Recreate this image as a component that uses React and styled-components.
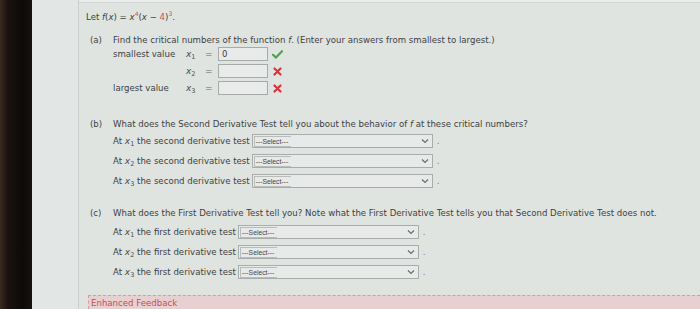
import React from 'react';
import styled, { createGlobalStyle } from 'styled-components';

const GlobalStyle = createGlobalStyle`
  body {
    margin: 0;
    background: #e1e4e2;
    font-family: 'DejaVu Sans', Verdana, sans-serif;
    color: #3d3f40;
  }
`;

const Frame = styled.div`
  display: flex;
  width: 700px;
  height: 309px;
  overflow: hidden;
  background: #e0e4e1;
`;

const Bezel = styled.div`
  width: 32px;
  flex-shrink: 0;
  background: linear-gradient(90deg, #3a2a1e 0%, #1a120e 25%, #0d0a09 70%, #15110f 100%);
`;

const Sidebar = styled.div`
  width: 46px;
  flex-shrink: 0;
  background: #e2e6e4;
  border-right: 1px solid #cbd0ce;
`;

const Main = styled.div`
  flex: 1;
  display: flex;
  flex-direction: column;
  font-size: 8.6px;
  line-height: 11px;
`;

const TopRule = styled.div`
  height: 3px;
  background: #e9ecea;
  border-bottom: 1px solid #d3d7d5;
`;

const Statement = styled.div`
  margin: 9px 0 0 7px;
`;

const Red = styled.span`
  color: #c8505a;
`;

const Sup = styled.sup`
  font-size: 6px;
  line-height: 0;
`;

const Question = styled.div`
  display: flex;
  margin-top: ${(p) => p.$top}px;
  padding-left: 11px;
`;

const PartLabel = styled.span`
  width: 23px;
  flex-shrink: 0;
`;

const Rows = styled.div`
  display: flex;
  flex-direction: column;
  gap: ${(p) => p.$gap}px;
  margin-top: ${(p) => p.$top}px;
  padding-left: 34px;
`;

const CritRow = styled.div`
  display: grid;
  grid-template-columns: 73px 19px 13px 50px 18px;
  align-items: center;
  height: 14px;
`;

const Var = styled.span`
  font-style: italic;
  font-size: 9px;
  color: #4a4c4d;
`;

const Sub = styled.sub`
  font-size: 6.5px;
  font-style: normal;
  vertical-align: -2px;
  line-height: 0;
`;

const Eq = styled.span`
  color: #666;
  font-size: 9px;
`;

const Input = styled.div`
  height: 14px;
  box-sizing: border-box;
  border: 1px solid #a6aaa8;
  background: #e8ebe9;
  padding-left: 3px;
  font-size: 8.5px;
  line-height: 12px;
`;

const Mark = styled.span`
  display: flex;
  justify-content: center;
`;

const TestRow = styled.div`
  display: flex;
  align-items: center;
  height: 14px;
`;

const TestLabel = styled.span`
  margin-right: 2px;
`;

const Select = styled.div`
  width: 181px;
  height: 14px;
  box-sizing: border-box;
  border: 1px solid #a8acaa;
  background: #e7eae8;
  display: flex;
  align-items: center;
  justify-content: space-between;
  padding: 0 3px 0 1px;
`;

const SelectText = styled.span`
  font-family: 'Liberation Sans', Arial, sans-serif;
  font-size: 6.8px;
  line-height: 9px;
  padding: 0 3px 0 1px;
  border: 1px solid #b8bcba;
  border-right: none;
  color: #444;
`;

const Period = styled.span`
  margin-left: 4px;
  color: #777;
`;

const Feedback = styled.div`
  margin: 16px 0 0 9px;
  flex: 1;
  background: #e8cfd0;
  border-top: 1px dashed #d59ca2;
  border-left: 1px dashed #d59ca2;
  padding: 2px 0 0 2px;
  color: #c0505c;
  font-size: 8.6px;
`;

const Check = () => (
  <svg width="11" height="9" viewBox="0 0 11 9">
    <path d="M1 4.8 L4 7.6 L10 1.2" fill="none" stroke="#4fa34f" strokeWidth="2.2" strokeLinecap="round" strokeLinejoin="round" />
  </svg>
);

const Cross = () => (
  <svg width="9" height="9" viewBox="0 0 9 9">
    <path d="M1.5 1.5 L7.5 7.5 M7.5 1.5 L1.5 7.5" stroke="#d9343a" strokeWidth="2.2" strokeLinecap="round" />
  </svg>
);

const Chevron = () => (
  <svg width="8" height="6" viewBox="0 0 8 6">
    <path d="M1 1.5 L4 4.5 L7 1.5" fill="none" stroke="#6a6e6c" strokeWidth="1.2" />
  </svg>
);

const X = ({ n }) => (
  <Var>
    x<Sub>{n}</Sub>
  </Var>
);

const crit = [
  { label: 'smallest value', n: 1, value: '0', ok: true },
  { label: '', n: 2, value: '', ok: false },
  { label: 'largest value', n: 3, value: '', ok: false },
];

const TestRows = ({ kind, top }) => (
  <Rows $gap={6} $top={top}>
    {[1, 2, 3].map((n) => (
      <TestRow key={n}>
        <TestLabel>
          At <X n={n} /> the {kind} derivative test
        </TestLabel>
        <Select>
          <SelectText>---Select---</SelectText>
          <Chevron />
        </Select>
        <Period>.</Period>
      </TestRow>
    ))}
  </Rows>
);

const App = () => {
  return (
    <>
      <GlobalStyle />
      <Frame>
        <Bezel />
        <Sidebar />
        <Main>
          <TopRule />
          <Statement>
            Let <i>f</i>(<i>x</i>) = <i>x</i>
            <Sup>
              <Red>4</Red>
            </Sup>
            (<i>x</i> − <Red>4</Red>)
            <Sup>
              <Red>3</Red>
            </Sup>
            .
          </Statement>

          <Question $top={12}>
            <PartLabel>(a)</PartLabel>
            <span>
              Find the critical numbers of the function <i>f</i>. (Enter your answers from smallest to largest.)
            </span>
          </Question>
          <Rows $gap={3} $top={1}>
            {crit.map((c) => (
              <CritRow key={c.n}>
                <span>{c.label}</span>
                <X n={c.n} />
                <Eq>=</Eq>
                <Input>{c.value}</Input>
                <Mark>{c.ok ? <Check /> : <Cross />}</Mark>
              </CritRow>
            ))}
          </Rows>

          <Question $top={24}>
            <PartLabel>(b)</PartLabel>
            <span>
              What does the Second Derivative Test tell you about the behavior of <i>f</i> at these critical numbers?
            </span>
          </Question>
          <TestRows kind="second" top={4} />

          <Question $top={20}>
            <PartLabel>(c)</PartLabel>
            <span>
              What does the First Derivative Test tell you? Note what the First Derivative Test tells you that Second
              Derivative Test does not.
            </span>
          </Question>
          <TestRows kind="first" top={6} />

          <Feedback>Enhanced Feedback</Feedback>
        </Main>
      </Frame>
    </>
  );
};

export default App;
